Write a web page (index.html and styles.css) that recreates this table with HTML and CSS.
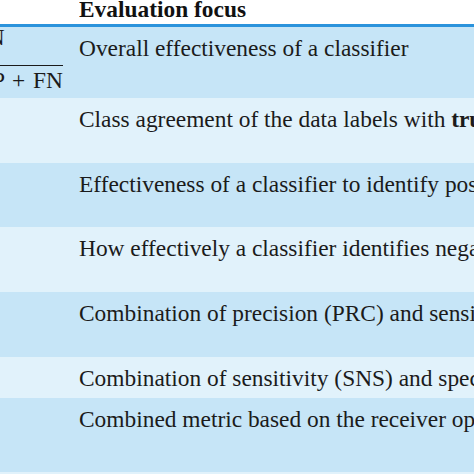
FILE: index.html
```html
<!DOCTYPE html>
<html>
<head>
<meta charset="utf-8">
<link rel="stylesheet" href="styles.css">
</head>
<body>
<div class="table">
  <div class="head">
    <div class="cell-l"></div>
    <div class="th">Evaluation focus</div>
  </div>
  <div class="row dark h70">
    <div class="cell-l">
      <div class="frac">
        <span class="num">TP + TN</span>
        <span class="den">TP + TN + FP + FN</span>
      </div>
    </div>
    <div class="cell-r">Overall effectiveness of a classifier</div>
  </div>
  <div class="row light h65">
    <div class="cell-l"></div>
    <div class="cell-r">Class agreement of the data labels with <b>true</b> labels</div>
  </div>
  <div class="row dark h64">
    <div class="cell-l"></div>
    <div class="cell-r">Effectiveness of a classifier to identify positive labels</div>
  </div>
  <div class="row light h65">
    <div class="cell-l"></div>
    <div class="cell-r">How effectively a classifier identifies negative labels</div>
  </div>
  <div class="row dark h65">
    <div class="cell-l"></div>
    <div class="cell-r">Combination of precision (PRC) and sensitivity (SNS)</div>
  </div>
  <div class="row light h41">
    <div class="cell-l"></div>
    <div class="cell-r">Combination of sensitivity (SNS) and specificity (SPC)</div>
  </div>
  <div class="row dark h74">
    <div class="cell-l"></div>
    <div class="cell-r">Combined metric based on the receiver operating characteristic</div>
  </div>
  <div class="row light h41">
    <div class="cell-l"></div>
    <div class="cell-r"></div>
  </div>
</div>
</body>
</html>
```
FILE: styles.css
```css
html, body {
  margin: 0;
  padding: 0;
  background: #ffffff;
}
body {
  width: 474px;
  height: 474px;
  overflow: hidden;
}
.table {
  width: 474px;
  font-family: "Liberation Serif", "Times New Roman", serif;
  font-size: 23.4px;
  color: #1b1b1b;
  white-space: nowrap;
}
.head {
  display: grid;
  grid-template-columns: 79px 1fr;
  height: 24px;
  border-bottom: 3px solid #2b93dc;
  background: #ffffff;
}
.th {
  font-weight: bold;
  line-height: 18px;
  color: #111111;
  overflow: hidden;
}
.row {
  display: grid;
  grid-template-columns: 79px 1fr;
  box-sizing: border-box;
  overflow: hidden;
}
.dark { background: #c6e5f7; }
.light { background: #e1f2fb; }
.h70 { height: 71px; }
.h65 { height: 65px; }
.h64 { height: 64px; }
.h41 { height: 41px; }
.h74 { height: 74px; }
.cell-l {
  display: flex;
  justify-content: flex-end;
  padding-right: 16px;
  overflow: hidden;
}
.cell-r {
  overflow: hidden;
  padding-top: 7px;
  line-height: 28px;
}
.frac {
  display: flex;
  flex-direction: column;
  align-items: center;
  flex: none;
}
.num {
  line-height: 20px;
  padding-bottom: 18px;
}
.den {
  border-top: 1.5px solid #1b1b1b;
  line-height: 28px;
  word-spacing: 2px;
}
```
